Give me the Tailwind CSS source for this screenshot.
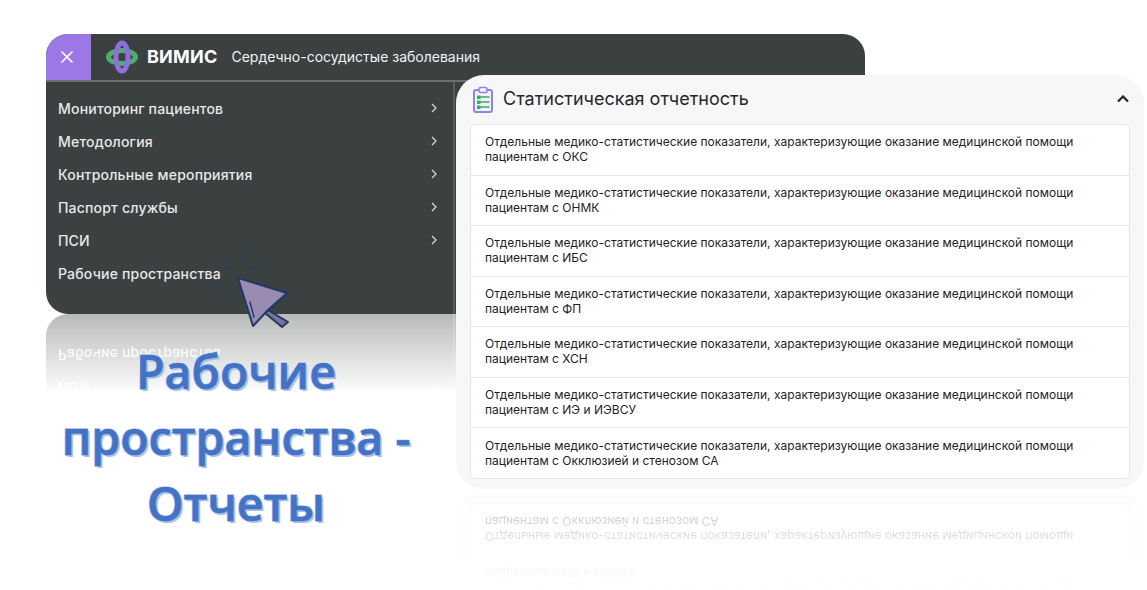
<!DOCTYPE html>
<html lang="ru">
<head>
<meta charset="UTF-8" />
<title>ВИМИС - Рабочие пространства</title>
<script src="https://cdn.jsdelivr.net/npm/@tailwindcss/browser@4"></script>
</head>
<body class="bg-white">
<div class="relative w-[1147px] h-[590px] overflow-hidden bg-white font-['Inter','Noto_Sans',sans-serif]">

  <!-- reflections -->
  <div class="absolute left-[46px] top-[314px] w-[819px] h-[76px] overflow-hidden [mask-image:linear-gradient(to_bottom,rgba(0,0,0,0.36),rgba(0,0,0,0.02))]">
    <div id="menuMirror" class="w-[819px] h-[280px] relative scale-y-[-1]"></div>
  </div>
  <div class="absolute left-[456px] top-[493px] w-[688px] h-[97px] overflow-hidden [mask-image:linear-gradient(to_bottom,rgba(0,0,0,0.3),rgba(0,0,0,0.06)_70%,rgba(0,0,0,0))]">
    <div id="listMirror" class="w-[688px] h-[414px] relative scale-y-[-1]"></div>
  </div>

  <!-- dark menu window -->
  <div id="menuPanel" class="absolute left-[46px] top-[34px] w-[819px] h-[280px] flex flex-col bg-[#3b4040] rounded-tl-[22px] rounded-tr-[22px] rounded-bl-[22px] overflow-hidden">
    <div class="flex items-center h-[48px] shrink-0 border-b-2 border-[#6b7070]">
      <div class="w-[45px] h-[46px] pr-[3px] flex items-center justify-center bg-[#9b78e6]">
        <svg width="14" height="14" viewBox="0 0 14 14" fill="none" stroke="#fff" stroke-width="1.7" stroke-linecap="round"><path d="M2 2l10 10M12 2L2 12"/></svg>
      </div>
      <svg class="ml-[15px]" width="32" height="35" viewBox="0 0 32 35" fill="none">
        <ellipse cx="16" cy="17" rx="13.5" ry="6.5" stroke="#4fae68" stroke-width="5"/>
        <ellipse cx="16" cy="17" rx="6" ry="14" stroke="#8f6fe0" stroke-width="5"/>
      </svg>
      <span class="ml-[9px] text-[18px] leading-none font-bold text-white tracking-[0.2px]">ВИМИС</span>
      <span class="ml-[14px] text-[14px] leading-none text-[#f1f2f2]">Сердечно-сосудистые заболевания</span>
    </div>
    <div class="flex flex-1">
      <div class="w-[409px] pt-[10px] border-r-2 border-[#5a5f5f] text-[14px] tracking-[0.2px] font-medium text-[#e8e9e9]">
        <div class="h-[33px] pl-[12px] pr-[15px] flex items-center justify-between">Мониторинг пациентов <svg class="mb-[2px]" width="7" height="10" viewBox="0 0 7 10" fill="none" stroke="#d5d7d7" stroke-width="1.3"><path d="M1 1l4 4-4 4"/></svg></div>
        <div class="h-[33px] pl-[12px] pr-[15px] flex items-center justify-between">Методология <svg class="mb-[2px]" width="7" height="10" viewBox="0 0 7 10" fill="none" stroke="#d5d7d7" stroke-width="1.3"><path d="M1 1l4 4-4 4"/></svg></div>
        <div class="h-[33px] pl-[12px] pr-[15px] flex items-center justify-between">Контрольные мероприятия <svg class="mb-[2px]" width="7" height="10" viewBox="0 0 7 10" fill="none" stroke="#d5d7d7" stroke-width="1.3"><path d="M1 1l4 4-4 4"/></svg></div>
        <div class="h-[33px] pl-[12px] pr-[15px] flex items-center justify-between">Паспорт службы <svg class="mb-[2px]" width="7" height="10" viewBox="0 0 7 10" fill="none" stroke="#d5d7d7" stroke-width="1.3"><path d="M1 1l4 4-4 4"/></svg></div>
        <div class="h-[33px] pl-[12px] pr-[15px] flex items-center justify-between">ПСИ <svg class="mb-[2px]" width="7" height="10" viewBox="0 0 7 10" fill="none" stroke="#d5d7d7" stroke-width="1.3"><path d="M1 1l4 4-4 4"/></svg></div>
        <div class="h-[33px] pl-[12px] pr-[15px] flex items-center justify-between">Рабочие пространства</div>
      </div>
    </div>
  </div>

  <!-- reports window -->
  <div id="listPanel" class="absolute left-[456px] top-[75px] w-[688px] h-[414px] flex flex-col px-[14px] bg-[#f7f7f7] rounded-[28px]">
    <div class="h-[49px] shrink-0 flex items-center">
      <svg class="ml-[2px]" width="22" height="28" viewBox="0 0 22 28" fill="none">
        <rect x="2" y="4" width="18" height="22" rx="2" fill="#f1f3fb" stroke="#8f83ea" stroke-width="2"/>
        <rect x="7" y="1.5" width="8" height="5" rx="1.500" fill="#f7f7f7" stroke="#8f83ea" stroke-width="1.6"/>
        <path d="M5 9.500h3.500v3.500H5zM5 14.500h3.500v3.500H5zM5 19.500h3.500v3.500H5z" fill="#3fa866"/>
        <path d="M8 11h9.500M8 16h9.500M8 21h9.500" stroke="#3fa866" stroke-width="1.500"/>
      </svg>
      <span class="ml-[9px] mb-[2px] text-[18px] leading-none text-[#24282c]">Статистическая отчетность</span>
      <svg class="ml-auto mr-[1px] mb-[2px]" width="12" height="8" viewBox="0 0 12 8" fill="none" stroke="#222" stroke-width="2.2"><path d="M1 6.500l5-5 5 5"/></svg>
    </div>
    <div class="flex flex-col bg-white border border-[#e5e7eb] rounded-[6px] text-[12px] leading-[15px] text-[#1f2328]">
      <div class="h-[50.5px] pl-[14px] pb-[1px] flex items-center border-b border-[#e5e7eb]"><p>Отдельные медико-статистические показатели, характеризующие оказание медицинской помощи<br>пациентам с ОКС</p></div>
      <div class="h-[50.5px] pl-[14px] pb-[1px] flex items-center border-b border-[#e5e7eb]"><p>Отдельные медико-статистические показатели, характеризующие оказание медицинской помощи<br>пациентам с ОНМК</p></div>
      <div class="h-[50.5px] pl-[14px] pb-[1px] flex items-center border-b border-[#e5e7eb]"><p>Отдельные медико-статистические показатели, характеризующие оказание медицинской помощи<br>пациентам с ИБС</p></div>
      <div class="h-[50.5px] pl-[14px] pb-[1px] flex items-center border-b border-[#e5e7eb]"><p>Отдельные медико-статистические показатели, характеризующие оказание медицинской помощи<br>пациентам с ФП</p></div>
      <div class="h-[50.5px] pl-[14px] pb-[1px] flex items-center border-b border-[#e5e7eb]"><p>Отдельные медико-статистические показатели, характеризующие оказание медицинской помощи<br>пациентам с ХСН</p></div>
      <div class="h-[50.5px] pl-[14px] pb-[1px] flex items-center border-b border-[#e5e7eb]"><p>Отдельные медико-статистические показатели, характеризующие оказание медицинской помощи<br>пациентам с ИЭ и ИЭВСУ</p></div>
      <div class="h-[50px] pl-[14px] pb-[1px] flex items-center"><p>Отдельные медико-статистические показатели, характеризующие оказание медицинской помощи<br>пациентам с Окклюзией и стенозом СА</p></div>
    </div>
  </div>

  <!-- cursor -->
  <svg class="absolute left-[200px] top-[250px]" width="100" height="90" viewBox="0 0 100 90" fill="none" stroke-linecap="round" stroke-linejoin="round">
    <path d="M43 3.500l-1 8.500M58 13.500l-6 5.500M23 13.500l7 6M13 32.500l10-.3M23 46.500l7-5.500" stroke="#1f3f70" stroke-width="1.3"/>
    <path d="M68 60l-3 3 17 14 6-5z" fill="#7d6f95" stroke="#1f3a68" stroke-width="2"/>
    <path d="M38 28l49 15-19 17-15 16z" fill="#9a8cb0" stroke="#1f3a68" stroke-width="2"/>
    <path d="M50 52l4 15" stroke="#1f3a68" stroke-width="1.4"/>
  </svg>

  <!-- slide caption -->
  <div class="absolute left-[26px] top-[338px] w-[420px] text-center text-[46.5px] leading-[66px] font-semibold text-[#4472c4] font-['Open_Sans',sans-serif] [-webkit-text-stroke:0.6px_#4472c4] [text-shadow:2px_2px_0_#a9c1e8,1px_-1px_0_#dbe5f5,-1px_1px_0_#dbe5f5,-1px_-1px_0_#dbe5f5]">
    Рабочие<br>пространства -<br>Отчеты
  </div>
</div>

<script>
  document.getElementById("menuMirror").appendChild(document.getElementById("menuPanel").cloneNode(true)).removeAttribute("id")
  document.getElementById("listMirror").appendChild(document.getElementById("listPanel").cloneNode(true)).removeAttribute("id")
  document.querySelectorAll("#menuMirror > div, #listMirror > div").forEach(el => {
    el.style.left = "0px"
    el.style.top = "0px"
  })
</script>
</body>
</html>
